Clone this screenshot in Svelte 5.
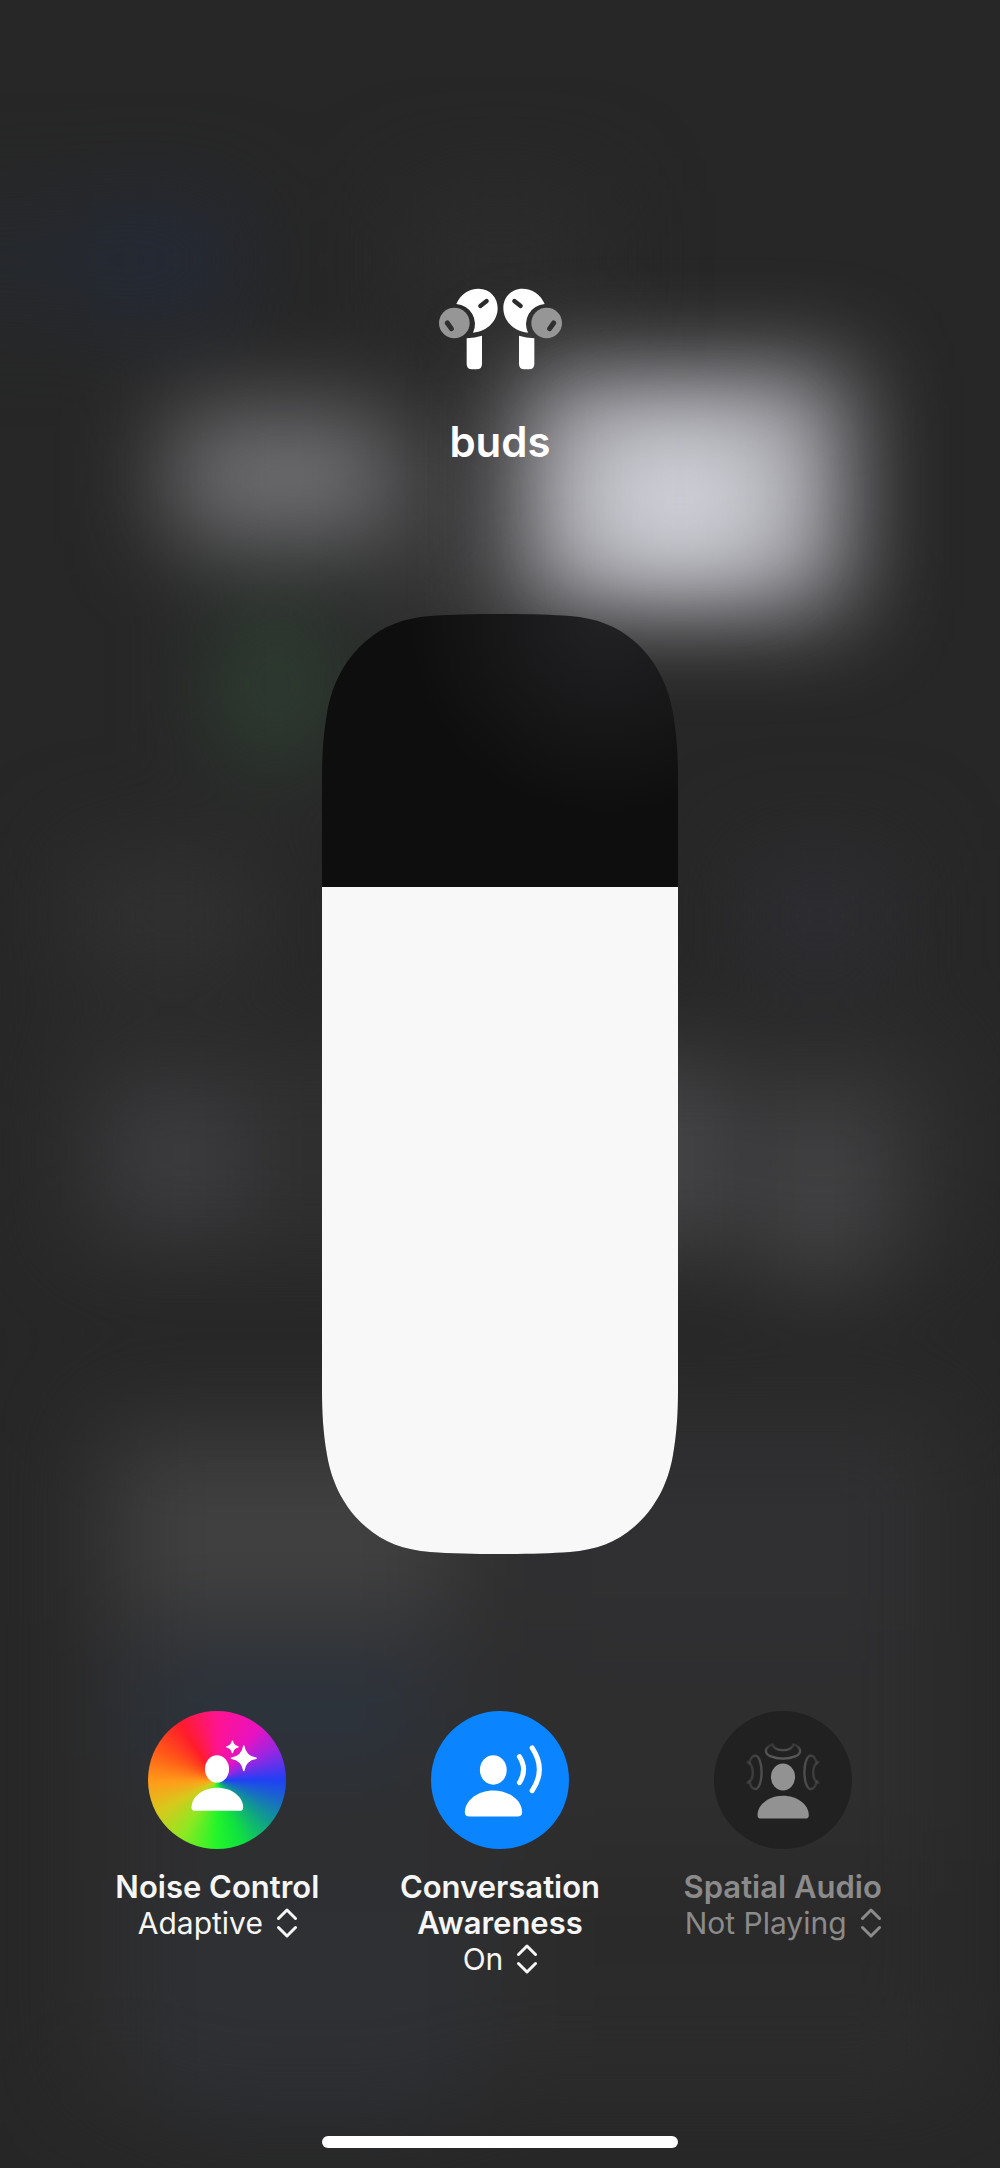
<script>
  let volume = $state(71);
  const pillPath =
    'M178 0C205 0 228 .6 248 2C274 4 295 12 312 27C332 44 346 69 351 99C355 122 356 142 356 165V775C356 798 355 818 351 841C346 871 332 896 312 913C295 928 274 936 248 938C228 939.4 205 940 178 940C151 940 128 939.4 108 938C82 936 61 928 44 913C24 896 10 871 5 841C1 818 0 798 0 775V165C0 142 1 122 5 99C10 69 24 44 44 27C61 12 82 4 108 2C128 .6 151 0 178 0Z';
</script>

{#snippet chevrons()}
  <svg class="chevrons" viewBox="0 0 20 30" aria-hidden="true">
    <path d="M1.5 10.5L10 2L18.5 10.5M1.5 19.5L10 28L18.5 19.5" />
  </svg>
{/snippet}

{#snippet bud()}
  <path
    d="M168 102C180 73 206 56 235 56C268 56 292 82 292 114C292 152 262 184 218 188A60 60 0 0 0 168 102Z"
    fill="#fff"
  />
  <path d="M199 205Q224 204 245 197V282Q245 298 229 298H215Q199 298 199 282Z" fill="#fff" />
  <circle cx="162" cy="159" r="46" fill="#969696" />
  <path d="M240 108L259 93" stroke="#2b2b2b" stroke-width="13" stroke-linecap="round" />
  <path d="M141 159L153 176" stroke="#2f2f2f" stroke-width="15" stroke-linecap="round" />
{/snippet}

<main class="screen">
  <svg class="backdrop" viewBox="0 0 1000 2168" preserveAspectRatio="none" aria-hidden="true">
    <defs>
      <filter id="soft" filterUnits="userSpaceOnUse" x="-300" y="-300" width="1600" height="2800" color-interpolation-filters="sRGB">
        <feGaussianBlur stdDeviation="48" />
      </filter>
      <clipPath id="pill" clipPathUnits="objectBoundingBox">
        <path d={pillPath} transform="scale(.002809 .0010638)" />
      </clipPath>
    </defs>
    <rect width="1000" height="2168" fill="#272727" />
    <g filter="url(#soft)">
      <rect x="-100" y="210" width="340" height="100" fill="#25292e" />
      <rect x="90" y="205" width="140" height="110" fill="#242a38" />
      <rect x="400" y="190" width="200" height="140" fill="#2c2c2c" />
      <rect x="390" y="420" width="140" height="220" fill="#373738" />
      <rect x="170" y="412" width="220" height="130" fill="#727275" />
      <rect x="220" y="610" width="110" height="150" fill="#2f4033" />
      <rect x="70" y="850" width="200" height="130" fill="#313132" />
      <rect x="740" y="850" width="160" height="130" fill="#2e2e33" />
      <rect x="60" y="1040" width="900" height="220" fill="#2f2f30" />
      <rect x="120" y="1100" width="120" height="120" fill="#404044" />
      <rect x="620" y="1070" width="90" height="170" fill="#4e4e51" />
      <rect x="760" y="1100" width="120" height="180" fill="#444446" />
      <rect x="80" y="1400" width="880" height="690" fill="#2e2e2f" />
      <rect x="120" y="1450" width="330" height="170" fill="#414142" />
      <rect x="560" y="1440" width="330" height="190" fill="#303033" />
      <rect x="140" y="1670" width="290" height="90" fill="#2c3541" />
      <rect x="160" y="1880" width="300" height="240" fill="#2e3034" />
      <rect x="540" y="1860" width="400" height="160" fill="#2a2a2a" />
    </g>
    <rect x="520" y="372" width="328" height="238" fill="#a8a8ae" filter="url(#soft)" />
    <rect x="600" y="440" width="160" height="120" fill="#d6d6df" filter="url(#soft)" />
  </svg>

  <header class="device">
    <svg class="buds" viewBox="110 54 381 246" fill="none" aria-hidden="true">
      {@render bud()}
      <g transform="matrix(-1 0 0 1 601 0)">{@render bud()}</g>
    </svg>
    <h1>buds</h1>
  </header>

  <div class="volume" style:--level="{volume}%">
    <input type="range" min="0" max="100" aria-label="Volume" bind:value={volume} />
  </div>

  <section class="modes">
    <button class="mode" type="button">
      <span class="disc rainbow">
        <svg viewBox="150 62 412 412" fill="#fff" aria-hidden="true">
          <ellipse cx="356" cy="235" rx="36" ry="41" />
          <path d="M280 350C280 317 315 291 357 291C399 291 434 317 434 350Q434 360 424 360H290Q280 360 280 350Z" />
          <g stroke="#fff" stroke-width="4" stroke-linejoin="round">
            <path d="M436 166Q441 198 473 203Q441 208 436 240Q431 208 399 203Q431 198 436 166Z" />
            <path d="M402 152Q405 166 419 169Q405 172 402 186Q399 172 385 169Q399 166 402 152Z" />
          </g>
        </svg>
      </span>
      <strong>Noise Control</strong>
      <span class="value">Adaptive {@render chevrons()}</span>
    </button>

    <button class="mode" type="button">
      <span class="disc blue">
        <svg viewBox="158 62 412 412" fill="#fff" aria-hidden="true">
          <ellipse cx="344" cy="238" rx="40" ry="44" />
          <path d="M259 364C259 328 299 299 344 299C390 299 430 328 430 364Q430 377 416 377H273Q259 377 259 364Z" />
          <path
            d="M422 198Q447 237 422 276M460 172Q503 236 460 300"
            fill="none"
            stroke="#fff"
            stroke-width="15"
            stroke-linecap="round"
          />
        </svg>
      </span>
      <strong>Conversation Awareness</strong>
      <span class="value">On {@render chevrons()}</span>
    </button>

    <button class="mode off" type="button" disabled>
      <span class="disc dark">
        <svg viewBox="165 62 412 412" fill="#929292" aria-hidden="true">
          <defs>
            <linearGradient id="fadeTop" gradientUnits="userSpaceOnUse" x1="0" y1="152" x2="0" y2="206">
              <stop offset="0" stop-color="#5a5a5a" stop-opacity="0" />
              <stop offset="0.5" stop-color="#5a5a5a" stop-opacity="0.8" />
              <stop offset="1" stop-color="#5a5a5a" />
            </linearGradient>
            <linearGradient id="fadeSide" gradientUnits="userSpaceOnUse" x1="255" y1="0" x2="310" y2="0">
              <stop offset="0" stop-color="#505051" stop-opacity="0.3" />
              <stop offset="1" stop-color="#505051" />
            </linearGradient>
          </defs>
          <g fill="none" stroke-width="7">
            <g stroke="url(#fadeTop)">
              <path d="M341 161C325 166 320 174 320 182C320 194 343 204 371 204C399 204 422 194 422 182C422 174 417 166 401 161" />
              <path d="M340 158C340 186 402 186 402 158" />
            </g>
            <g stroke="url(#fadeSide)">
              <path d="M269 222C273 204 280 195 288 195C299 195 307 218 307 245C307 272 299 295 288 295C280 295 273 286 269 268" />
              <path d="M262 214C287 214 287 277 262 277" />
            </g>
            <g stroke="url(#fadeSide)" transform="matrix(-1 0 0 1 742 0)">
              <path d="M269 222C273 204 280 195 288 195C299 195 307 218 307 245C307 272 299 295 288 295C280 295 273 286 269 268" />
              <path d="M262 214C287 214 287 277 262 277" />
            </g>
          </g>
          <ellipse cx="371" cy="259" rx="36" ry="40" />
          <path d="M295 373C295 341 330 315 371 315C413 315 448 341 448 373Q448 383 438 383H305Q295 383 295 373Z" />
        </svg>
      </span>
      <strong>Spatial Audio</strong>
      <span class="value">Not Playing {@render chevrons()}</span>
    </button>
  </section>

  <div class="home"></div>
</main>

<style>
  :global(body) {
    margin: 0;
    background: #272727;
  }
  .screen {
    position: relative;
    box-sizing: border-box;
    min-height: 100vh;
    padding: 288px 0 20px;
    display: flex;
    flex-direction: column;
    align-items: center;
    overflow: hidden;
    color: #fff;
    font-family: Inter, "Liberation Sans", sans-serif;
    isolation: isolate;
  }
  .backdrop {
    position: absolute;
    inset: 0;
    width: 100%;
    height: 100%;
    z-index: -1;
  }
  .device {
    display: flex;
    flex-direction: column;
    align-items: center;
    gap: 44px;
    margin-bottom: 144px;
  }
  .buds {
    width: 127px;
    height: 82px;
  }
  h1 {
    margin: 0;
    font-size: 42px;
    line-height: 56px;
    font-weight: 600;
  }
  .volume {
    width: 36%;
    max-width: 356px;
    aspect-ratio: 356 / 940;
    clip-path: url(#pill);
    background: linear-gradient(to top, #f8f8f8 var(--level), rgb(0 0 0 / 0) var(--level)),
      radial-gradient(circle at 80% 0, #222225, #0e0e0e 200px);
  }
  .volume input {
    width: 100%;
    height: 100%;
    margin: 0;
    opacity: 0;
    writing-mode: vertical-lr;
    direction: rtl;
    cursor: pointer;
  }
  .modes {
    box-sizing: border-box;
    width: 100%;
    max-width: 1000px;
    margin-top: 157px;
    padding: 0 76px;
    display: grid;
    grid-template-columns: repeat(3, 1fr);
    align-items: start;
  }
  .mode {
    display: flex;
    flex-direction: column;
    align-items: center;
    margin: 0;
    padding: 0 32px;
    border: 0;
    background: none;
    color: #f6f6f6;
    font: 400 30px/36px Inter, "Liberation Sans", sans-serif;
    text-align: center;
    cursor: pointer;
  }
  .mode.off {
    color: #8b8b8b;
    cursor: default;
  }
  .disc {
    width: 138px;
    height: 138px;
    margin-bottom: 20px;
    border-radius: 50%;
    overflow: hidden;
  }
  .disc svg {
    display: block;
    width: 100%;
    height: 100%;
  }
  .rainbow {
    background: conic-gradient(
      #ff1490,
      #e912c0 38deg,
      #9a26e2 62deg,
      #2040f4 90deg,
      #1a62d0 105deg,
      #109a90 128deg,
      #10e040 158deg,
      #22f52a 180deg,
      #8ee822 212deg,
      #d8c81c 242deg,
      #ff9c1a 268deg,
      #ff5a18 296deg,
      #ff1c2a 326deg,
      #ff1490
    );
  }
  .blue {
    background: #0a84ff;
  }
  .dark {
    background: #212122;
  }
  strong {
    font-size: 31px;
    font-weight: 600;
  }
  .value {
    display: flex;
    align-items: center;
    gap: 14px;
    white-space: nowrap;
  }
  .chevrons {
    width: 20px;
    height: 30px;
    fill: none;
    stroke: currentColor;
    stroke-width: 3;
    stroke-linecap: round;
    stroke-linejoin: round;
  }
  .home {
    width: 36%;
    max-width: 356px;
    height: 12px;
    margin-top: auto;
    border-radius: 6px;
    background: #fff;
  }
</style>
